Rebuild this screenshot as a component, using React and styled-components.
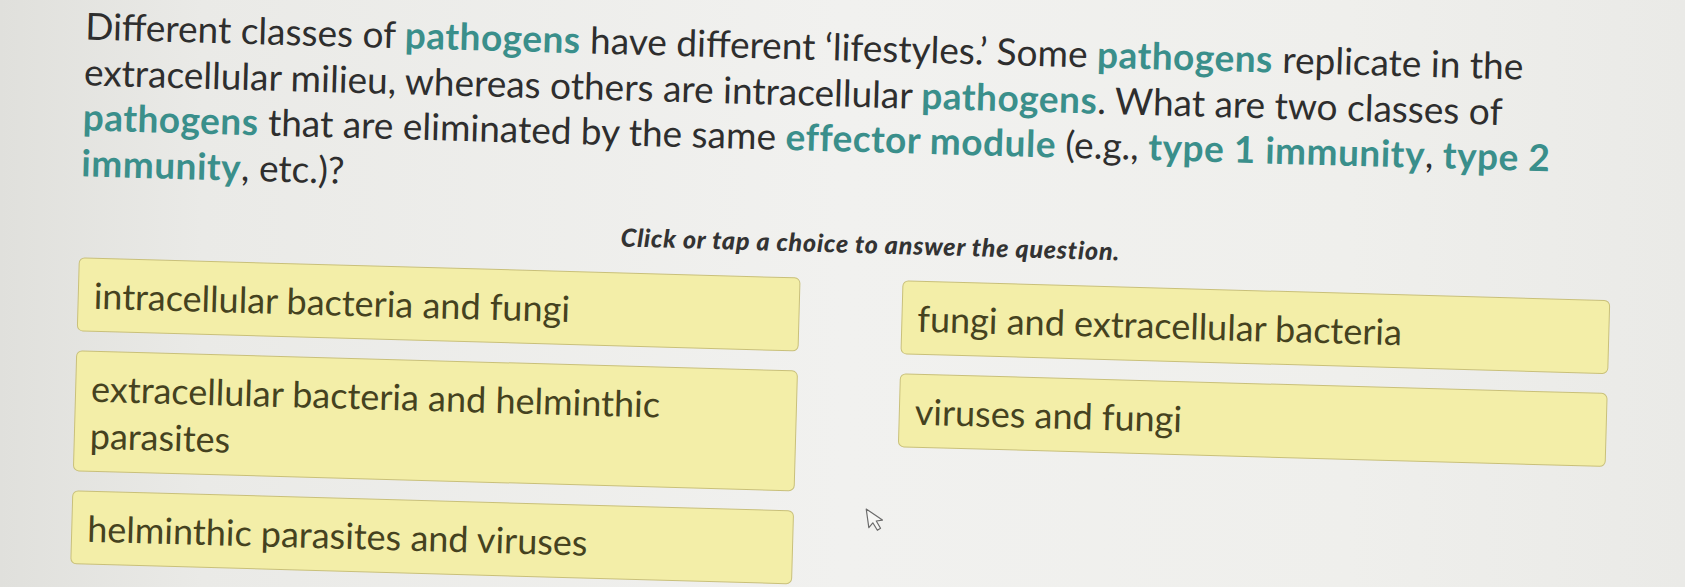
import React from 'react';
import styled, { createGlobalStyle } from 'styled-components';

const GlobalStyle = createGlobalStyle`
  html, body {
    margin: 0;
    padding: 0;
    background: #efefec;
  }
`;

const Page = styled.div`
  position: relative;
  width: 1685px;
  height: 587px;
  overflow: hidden;
  background: linear-gradient(90deg, #e0e0dc 0%, #eaeae7 12%, #f1f1ef 50%, #efefec 80%, #eaeae7 100%);
  font-family: Lato, "Open Sans", sans-serif;
`;

// the photo is taken a little askew, so the whole sheet leans
const Stage = styled.div`
  padding-left: 86px;
  transform: rotate(1.6deg);
  transform-origin: 0 0;
`;

const Question = styled.p`
  margin: 0;
  font-size: 37px;
  line-height: 45.5px;
  color: #2e2e2e;
  white-space: nowrap;
`;

const Term = styled.b`
  font-weight: 700;
  letter-spacing: 0.5px;
  color: #3a8f8b;
`;

const Prompt = styled.div`
  width: 1532px;
  margin-top: 22px;
  padding-left: 50px;
  box-sizing: border-box;
  text-align: center;
  font-size: 25px;
  line-height: 30px;
  letter-spacing: 0.8px;
  font-style: italic;
  font-weight: 900;
  color: #333;
`;

const Choices = styled.div`
  display: grid;
  grid-template-columns: 722px 708px;
  column-gap: 102px;
  align-items: start;
  margin-top: 21px;
`;

const Column = styled.div`
  display: flex;
  flex-direction: column;
  gap: 19px;
`;

const Choice = styled.div`
  box-sizing: border-box;
  padding: 13px 15px 12px;
  background: #f3eea8;
  border: 1px solid #c9c07a;
  border-radius: 6px;
  font-size: 36px;
  font-weight: 400;
  line-height: 47px;
  color: #45421f;
  cursor: pointer;
`;

const Cursor = styled.svg`
  position: absolute;
  left: 866px;
  top: 506px;
  width: 22px;
  height: 28px;
  transform: rotate(-8deg);
`;

const leftChoices = [
  'intracellular bacteria and fungi',
  'extracellular bacteria and helminthic parasites',
  'helminthic parasites and viruses',
];

const rightChoices = [
  'fungi and extracellular bacteria',
  'viruses and fungi',
];

export default function App() {
  return (
    <Page>
      <GlobalStyle />
      <Stage>
        <Question>
          Different classes of <Term>pathogens</Term> have different ‘lifestyles.’ Some <Term>pathogens</Term> replicate in the
          <br />
          extracellular milieu, whereas others are intracellular <Term>pathogens</Term>. What are two classes of
          <br />
          <Term>pathogens</Term> that are eliminated by the same <Term>effector module</Term> (e.g., <Term>type 1 immunity</Term>, <Term>type 2</Term>
          <br />
          <Term>immunity</Term>, etc.)?
        </Question>
        <Prompt>Click or tap a choice to answer the question.</Prompt>
        <Choices>
          <Column>
            {leftChoices.map(text => (
              <Choice key={text}>{text}</Choice>
            ))}
          </Column>
          <Column>
            {rightChoices.map(text => (
              <Choice key={text}>{text}</Choice>
            ))}
          </Column>
        </Choices>
      </Stage>
      <Cursor viewBox="0 0 20 26">
        <path
          d="M1.5 1.5 L1.5 19 L5.8 15 L9 22.5 L12.2 21 L9.2 13.8 L15 13.8 Z"
          fill="#f7f7f5"
          stroke="#6b6b6b"
          strokeWidth="1.1"
          strokeLinejoin="round"
        />
      </Cursor>
    </Page>
  );
}
